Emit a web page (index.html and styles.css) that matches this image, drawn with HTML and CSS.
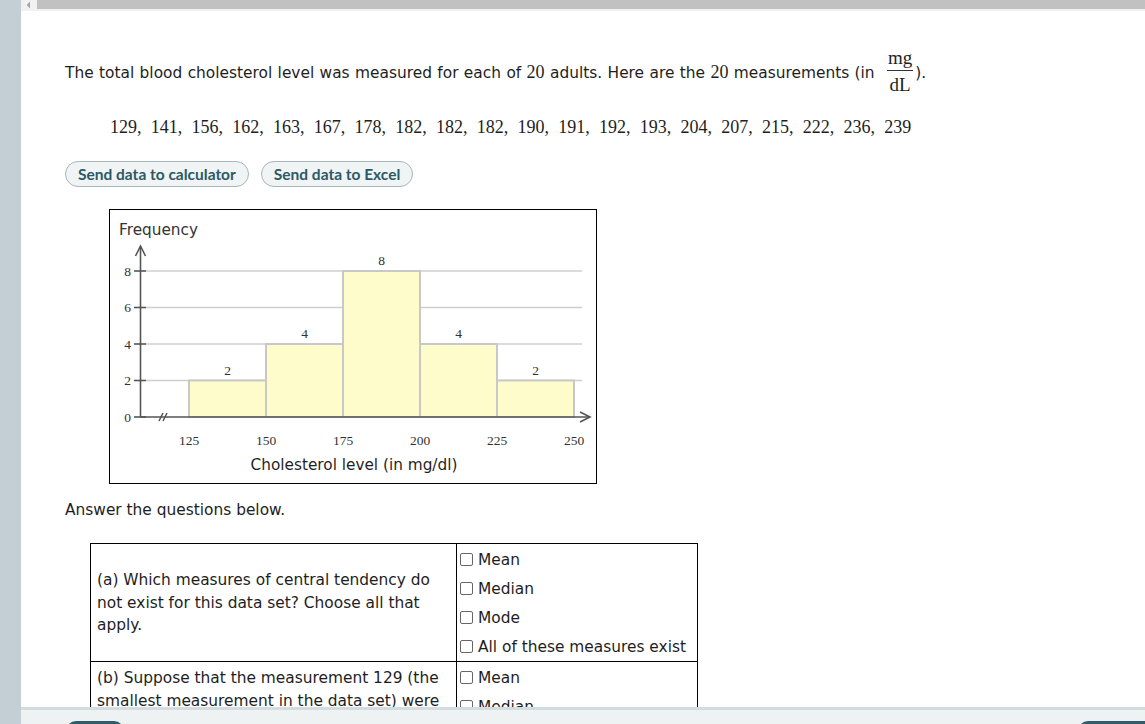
FILE: index.html
```html
<!DOCTYPE html>
<html>
<head>
<meta charset="utf-8">
<link rel="stylesheet" href="styles.css">
</head>
<body>
<div class="side"></div>
<div class="main">
  <div class="hscroll">
    <div class="hs-btn"><svg width="6" height="8" viewBox="0 0 6 8"><path d="M4 0.5 L0.8 4 L4 7.5 Z" fill="#a3a3a3"/></svg></div>
    <div class="hs-track"></div>
  </div>
  <div class="content">
    <p class="intro">The total blood cholesterol level was measured for each of <span class="m">20</span> adults. Here are the <span class="m">20</span> measurements (in <span class="frac"><span class="num">mg</span><span class="den">dL</span></span>).</p>
    <p class="data">129, 141, 156, 162, 163, 167, 178, 182, 182, 182, 190, 191, 192, 193, 204, 207, 215, 222, 236, 239</p>
    <div class="btns">
      <button class="btn">Send data to calculator</button>
      <button class="btn">Send data to Excel</button>
    </div>
    <div class="chart">
      <svg width="486" height="272" viewBox="0 0 486 272">
        <text x="9" y="25" class="lbl">Frequency</text>
        <g class="grid">
          <line x1="36" y1="61" x2="472" y2="61"/>
          <line x1="36" y1="97.5" x2="472" y2="97.5"/>
          <line x1="36" y1="134" x2="472" y2="134"/>
          <line x1="36" y1="170.5" x2="472" y2="170.5"/>
        </g>
        <g class="bars">
          <rect x="79" y="170.5" width="77" height="36.5"/>
          <rect x="156" y="134" width="77" height="73"/>
          <rect x="233" y="61" width="77" height="146"/>
          <rect x="310" y="134" width="77" height="73"/>
          <rect x="387" y="170.5" width="77" height="36.5"/>
        </g>
        <g class="num-lbl" text-anchor="middle">
          <text x="117.5" y="164.5">2</text>
          <text x="194.5" y="128">4</text>
          <text x="271.5" y="55">8</text>
          <text x="348.5" y="128">4</text>
          <text x="425.5" y="164.5">2</text>
        </g>
        <g class="axis">
          <line x1="30.5" y1="37" x2="30.5" y2="207"/>
          <polyline points="25.5,46 30.5,36 35.5,46"/>
          <line x1="30.5" y1="207" x2="479" y2="207"/>
          <polyline points="470,202 480,207 470,212"/>
          <line x1="24" y1="207" x2="36" y2="207"/>
          <line x1="24" y1="170.5" x2="36" y2="170.5"/>
          <line x1="24" y1="134" x2="36" y2="134"/>
          <line x1="24" y1="97.5" x2="36" y2="97.5"/>
          <line x1="24" y1="61" x2="36" y2="61"/>
          <line x1="49" y1="211" x2="53" y2="203"/>
          <line x1="53" y1="211" x2="57" y2="203"/>
        </g>
        <g class="num-lbl" text-anchor="end">
          <text x="21" y="211.5">0</text>
          <text x="21" y="175">2</text>
          <text x="21" y="138.5">4</text>
          <text x="21" y="102">6</text>
          <text x="21" y="65.5">8</text>
        </g>
        <g class="num-lbl" text-anchor="middle">
          <text x="79" y="235">125</text>
          <text x="156" y="235">150</text>
          <text x="233" y="235">175</text>
          <text x="310" y="235">200</text>
          <text x="387" y="235">225</text>
          <text x="464" y="235">250</text>
        </g>
        <text x="244" y="260" class="lbl title" text-anchor="middle">Cholesterol level (in mg/dl)</text>
      </svg>
    </div>
    <p class="answer">Answer the questions below.</p>
    <table class="qtable">
      <tr>
        <td class="q">(a) Which measures of central tendency do<br>not exist for this data set? Choose all that<br>apply.</td>
        <td class="opts">
          <label class="opt"><span class="cb"></span>Mean</label>
          <label class="opt"><span class="cb"></span>Median</label>
          <label class="opt"><span class="cb"></span>Mode</label>
          <label class="opt"><span class="cb"></span>All of these measures exist</label>
        </td>
      </tr>
      <tr>
        <td class="q q-top">(b) Suppose that the measurement 129 (the<br>smallest measurement in the data set) were<br>replaced by 119. Which measures of central<br>tendency would change? Choose all that<br>apply.</td>
        <td class="opts">
          <label class="opt"><span class="cb"></span>Mean</label>
          <label class="opt"><span class="cb"></span>Median</label>
          <label class="opt"><span class="cb"></span>Mode</label>
          <label class="opt"><span class="cb"></span>None of these measures</label>
        </td>
      </tr>
    </table>
  </div>
  <div class="footer">
    <span class="pill pill-left"></span>
    <span class="pill pill-right"></span>
  </div>
</div>
</body>
</html>
```
FILE: styles.css
```css
html, body {
  margin: 0;
  padding: 0;
}
body {
  display: flex;
  width: 1145px;
  height: 724px;
  overflow: hidden;
  background: #fff;
  font-family: "DejaVu Sans", Verdana, sans-serif;
  color: #1e1e1e;
}
.side {
  width: 21px;
  flex: none;
  background: #c3cfd5;
}
.main {
  flex: 1;
  display: flex;
  flex-direction: column;
  min-width: 0;
  height: 724px;
}
.hscroll {
  display: flex;
  height: 9px;
  border-bottom: 2px solid #f1f1f1;
  flex: none;
}
.hs-btn {
  width: 16px;
  background: #f1f1f1;
  display: flex;
  align-items: center;
  justify-content: center;
}
.hs-track {
  flex: 1;
  background: #c1c1c1;
}
.content {
  flex: 1;
  overflow: hidden;
  padding-left: 44px;
}
.intro {
  margin: 0;
  padding-top: 39px;
  font-size: 15.4px;
  line-height: 20px;
  word-spacing: 0.5px;
}
.m {
  font-family: "Liberation Serif", "Times New Roman", serif;
  font-size: 18px;
}
.frac {
  display: inline-block;
  vertical-align: -13px;
  text-align: center;
  font-family: "Liberation Serif", "Times New Roman", serif;
  font-size: 19px;
  margin: 0 2px 0 7px;
}
.num {
  display: block;
  line-height: 15px;
  padding: 0 1px 5px;
  border-bottom: 1px solid #333;
}
.den {
  display: block;
  line-height: 18px;
  padding-top: 5px;
}
.data {
  margin: 23px 0 0;
  padding-left: 45px;
  font-family: "Liberation Serif", "Times New Roman", serif;
  font-size: 18px;
  line-height: 20px;
  word-spacing: 4.75px;
}
.btns {
  display: flex;
  gap: 12px;
  margin-top: 24px;
}
.btn {
  height: 26px;
  padding: 0 12px;
  border: 1px solid #a6b6bc;
  border-radius: 13px;
  background: #f0f4f5;
  color: #2c5966;
  font-family: Lato, "Open Sans", sans-serif;
  font-weight: 700;
  font-size: 15.5px;
}
.chart {
  width: 486px;
  height: 273px;
  border: 1px solid #000;
  margin: 22px 0 0 44px;
}
.chart svg {
  display: block;
}
.lbl {
  font-family: "DejaVu Sans", Verdana, sans-serif;
  font-size: 15.3px;
  fill: #333;
}
.title {
  fill: #1f1f1f;
}
.grid line {
  stroke: #cfcfcf;
  stroke-width: 1.5;
}
.bars rect {
  fill: #fffccc;
  stroke: #c8c8c8;
  stroke-width: 2;
}
.num-lbl text {
  font-family: "Liberation Serif", "Times New Roman", serif;
  font-size: 13.5px;
  fill: #333;
}
.axis line, .axis polyline {
  stroke: #555;
  stroke-width: 1.6;
  fill: none;
}
.answer {
  margin: 16px 0 0;
  font-size: 15.4px;
  line-height: 20px;
}
.qtable {
  margin: 23px 0 0 25px;
  border-collapse: collapse;
  width: 608px;
}
.qtable td {
  border: 1px solid #000;
  vertical-align: middle;
  padding: 0;
}
.q {
  width: 359px;
  padding: 1px 0 0 6px !important;
  font-size: 15.4px;
  line-height: 22.5px;
}
.qtable td.q-top {
  vertical-align: top;
  padding-top: 5px !important;
}
.opts {
  padding: 1px 0 0 3px !important;
}
.opt {
  display: flex;
  align-items: center;
  height: 29px;
  font-size: 15.4px;
}
.cb {
  width: 11px;
  height: 11px;
  border: 1px solid #666;
  border-radius: 2px;
  margin-right: 5px;
  background: #fff;
}
.footer {
  flex: none;
  height: 14px;
  border-top: 3px solid #d3dcdf;
  background: #eef2f3;
  display: flex;
  justify-content: space-between;
  overflow: hidden;
}
.pill {
  display: block;
  height: 20px;
  margin-top: 11px;
  border-radius: 10px;
  background: #2f5e6a;
}
.pill-left {
  width: 58px;
  margin-left: 45px;
}
.pill-right {
  width: 90px;
  margin-right: -23px;
}
```
